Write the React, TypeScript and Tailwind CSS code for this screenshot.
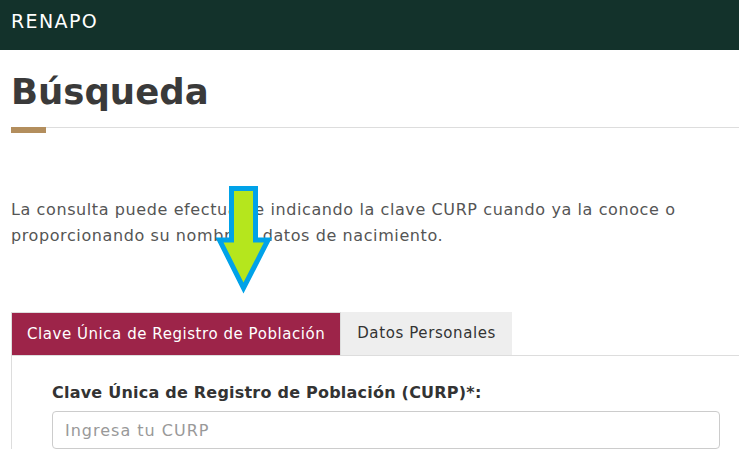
import React, { useState } from 'react';

const tabs = ['Clave Única de Registro de Población', 'Datos Personales'];

// Flecha indicadora sobre el texto de ayuda
const DownArrow = () => (
  <svg
    className="absolute left-[214px] top-[182px]"
    width="60"
    height="114"
    viewBox="0 0 60 114"
  >
    <polygon
      points="17.5,6.5 41.5,6.5 41.5,58 54,58 29.5,106 5.5,58 17.5,58"
      fill="#b5e61d"
      stroke="#00a2e8"
      strokeWidth="5"
      strokeLinejoin="miter"
    />
  </svg>
);

const App = () => {
  const [activeTab, setActiveTab] = useState(0);
  const [curp, setCurp] = useState('');

  return (
    <div className="relative min-h-[468px] bg-white font-['DejaVu_Sans',sans-serif]">
      {/* Barra superior */}
      <header className="h-[50px] bg-[#13322b] px-[11px] pt-[7px]">
        <span className="text-[19px] tracking-[1.4px] text-white">RENAPO</span>
      </header>

      <main className="pl-[11px]">
        <h1 className="mt-[20px] text-[35.5px] font-semibold leading-[44px] text-[#3a3a3a]">Búsqueda</h1>
        <div className="relative mt-[13px] h-px bg-[#dddddd]">
          <div className="absolute left-0 top-0 h-[6px] w-[35px] bg-[#b38e5d]" />
        </div>

        <p className="mt-[69px] pr-[20px] text-[16px] leading-[26px] tracking-[0.6px] text-[#555]">
          La consulta puede efectuarse indicando la clave CURP cuando ya la conoce o proporcionando su nombre y datos de nacimiento.
        </p>

        {/* Pestañas */}
        <div className="mt-[63px] flex border-b border-[#dddddd]">
          {tabs.map((tab, i) => (
            <button
              key={tab}
              onClick={() => setActiveTab(i)}
              className={
                i === activeTab
                  ? 'h-[43px] border border-b-0 border-[#dddddd] bg-[#9d2449] px-[15px] text-[15px] tracking-[0.55px] text-white'
                  : 'h-[43px] bg-[#eeeeee] px-[16px] text-[15px] tracking-[0.6px] text-[#333]'
              }
            >
              {tab}
            </button>
          ))}
        </div>

        <div className="border-l border-[#dddddd] pl-[40px] pr-[19px] pt-[25px]">
          <label className="block text-[16px] font-semibold leading-[24px] tracking-[0.22px] text-[#333]">
            Clave Única de Registro de Población (CURP)*:
          </label>
          <input
            value={curp}
            onChange={(e) => setCurp(e.target.value)}
            placeholder="Ingresa tu CURP"
            className="mt-[6px] h-[38px] w-full rounded-[4px] border border-[#cccccc] px-[12px] text-[16px] tracking-[1px] text-[#333] placeholder:text-[#999]"
          />
        </div>
      </main>

      <DownArrow />
    </div>
  );
};

export default App;
